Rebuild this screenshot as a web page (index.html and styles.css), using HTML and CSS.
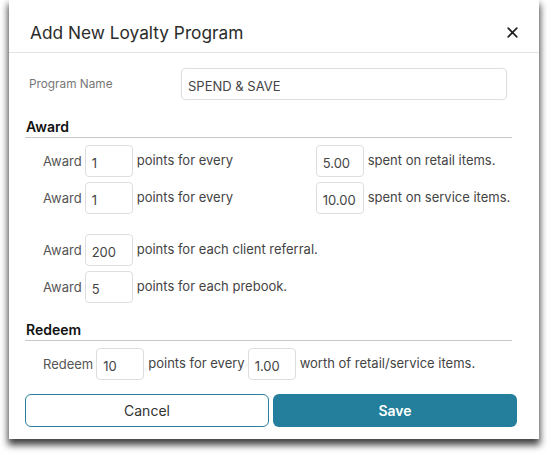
FILE: index.html
```html
<!DOCTYPE html>
<html>
<head>
<meta charset="utf-8">
<link rel="stylesheet" href="styles.css">
</head>
<body>
<div class="modal">
  <div class="header">
    <div class="title">Add New Loyalty Program</div>
    <div class="close">
      <svg width="11" height="11" viewBox="0 0 11 11"><path d="M1.2 1.2 L9.8 9.8 M9.8 1.2 L1.2 9.8" stroke="#222" stroke-width="1.7" stroke-linecap="round"/></svg>
    </div>
  </div>
  <div class="content">
    <div class="name-row">
      <div class="name-label">Program Name</div>
      <div class="field name-field">SPEND &amp; SAVE</div>
    </div>

    <div class="section-title">Award</div>
    <div class="row first">
      <span class="lbl">Award</span>
      <span class="field num">1</span>
      <span class="txt mid">points for every</span>
      <span class="field num">5.00</span>
      <span class="txt">spent on retail items.</span>
    </div>
    <div class="row">
      <span class="lbl">Award</span>
      <span class="field num">1</span>
      <span class="txt mid">points for every</span>
      <span class="field num">10.00</span>
      <span class="txt">spent on service items.</span>
    </div>
    <div class="row spaced">
      <span class="lbl">Award</span>
      <span class="field num">200</span>
      <span class="txt">points for each client referral.</span>
    </div>
    <div class="row">
      <span class="lbl">Award</span>
      <span class="field num">5</span>
      <span class="txt">points for each prebook.</span>
    </div>

    <div class="section-title redeem">Redeem</div>
    <div class="row first">
      <span class="lbl">Redeem</span>
      <span class="field num">10</span>
      <span class="txt">points for every</span>
      <span class="field num">1.00</span>
      <span class="txt">worth of retail/service items.</span>
    </div>

    <div class="buttons">
      <div class="btn cancel">Cancel</div>
      <div class="btn save">Save</div>
    </div>
  </div>
</div>
</body>
</html>
```
FILE: styles.css
```css
html, body {
  margin: 0;
  padding: 0;
  background: #ffffff;
}
body {
  font-family: Inter, "Liberation Sans", sans-serif;
  color: #444;
  width: 552px;
  height: 455px;
  overflow: hidden;
}
.modal {
  margin-left: 9px;
  width: 530px;
  background: #fff;
  box-shadow: 0 5px 7px 1px rgba(0, 0, 0, 0.75);
  box-sizing: border-box;
}
.header {
  border-bottom: 1px solid #e3e3e3;
  display: flex;
  align-items: center;
  justify-content: space-between;
  padding: 12px 21px 0 21px;
  height: 40px;
}
.title {
  font-size: 17.3px;
  color: #2b2b2b;
}
.close {
  display: flex;
  align-items: center;
}
.content {
  padding: 15px 22px 12px 16px;
}
.name-row {
  display: flex;
  align-items: center;
  height: 32px;
}
.name-label {
  width: 152px;
  padding-left: 4px;
  font-size: 11.8px;
  color: #777;
}
.field {
  box-sizing: border-box;
  border: 1px solid #dedede;
  border-radius: 4px;
  height: 32px;
  display: flex;
  align-items: center;
  padding: 3px 0 0 6px;
  font-size: 13px;
  color: #444;
  background: #fff;
}
.name-field {
  width: 326px;
  padding-left: 6px;
}
.section-title {
  margin-top: 18px;
  font-size: 14px;
  font-weight: 600;
  color: #111;
  line-height: 18px;
  padding-bottom: 1px;
  padding-left: 1px;
  border-bottom: 1px solid #c8c8c8;
  margin-right: 5px;
}
.row {
  display: flex;
  align-items: center;
  height: 32px;
  margin-top: 5px;
  padding-left: 18px;
  font-size: 13px;
}
.row.first {
  margin-top: 7px;
}
.row.spaced {
  margin-top: 20px;
}
.lbl {
  color: #555;
  margin-right: 3px;
}
.num {
  width: 48px;
}
.txt {
  color: #444;
  margin-left: 4px;
  margin-right: 3px;
  padding-bottom: 2px;
}
.mid {
  width: 176px;
}
.buttons {
  display: flex;
  gap: 4px;
  margin-top: 14px;
}
.btn {
  width: 244px;
  height: 33px;
  box-sizing: border-box;
  border-radius: 6px;
  display: flex;
  align-items: center;
  justify-content: center;
  font-size: 14px;
}
.cancel {
  border: 1px solid #2a7f9a;
  color: #333;
}
.save {
  background: #237f9b;
  color: #fff;
  font-weight: 600;
}
```
